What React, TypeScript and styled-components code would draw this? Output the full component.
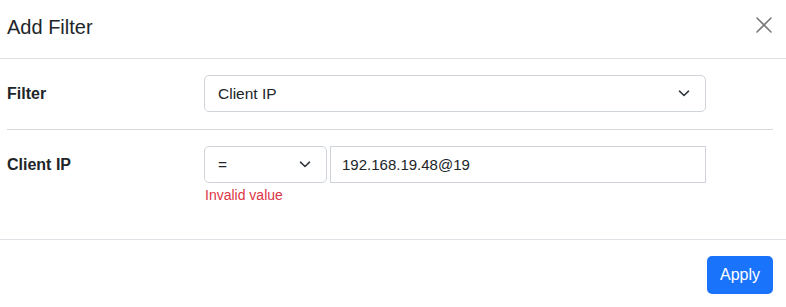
import styled, { createGlobalStyle } from "styled-components";

const GlobalStyle = createGlobalStyle`
  html, body {
    margin: 0;
    padding: 0;
    background: #fff;
  }
  body {
    font-family: "Liberation Sans", Arial, sans-serif;
    color: #212529;
  }
`;

const Modal = styled.div`
  width: 786px;
  background: #fff;
`;

const Header = styled.div`
  height: 58px;
  display: flex;
  align-items: center;
  justify-content: space-between;
  padding: 0 13px 0 7px;
  border-bottom: 1px solid #dee2e6;
`;

const Title = styled.h5`
  margin: 0;
  font-size: 20px;
  font-weight: 400;
  line-height: 1.2;
  margin-top: -4px;
`;

const CloseButton = styled.button`
  width: 18px;
  height: 18px;
  padding: 0;
  margin-top: -8px;
  border: none;
  background: transparent;
  display: flex;
  align-items: center;
  justify-content: center;
  cursor: pointer;
`;

const Body = styled.div`
  padding: 0 13px 19px 7px;
`;

interface RowProps {
  $divider?: boolean;
}

const Row = styled.div<RowProps>`
  display: grid;
  grid-template-columns: 197px 502px;
  align-items: start;
  padding: 16px 0 17px;
  border-bottom: ${(p) => (p.$divider ? "1px solid #d6d8db" : "none")};
`;

const Label = styled.label`
  height: 37px;
  display: flex;
  align-items: center;
  font-size: 16px;
  font-weight: 700;
`;

const Controls = styled.div`
  display: flex;
  flex-direction: column;
`;

const InputGroup = styled.div`
  display: flex;
  gap: 3px;
`;

interface SelectProps {
  $width?: number;
}

const SelectBox = styled.div<SelectProps>`
  box-sizing: border-box;
  width: ${(p) => (p.$width ? `${p.$width}px` : "100%")};
  height: 37px;
  display: flex;
  align-items: center;
  justify-content: space-between;
  padding: 0 15px 0 13px;
  border: 1px solid #ced4da;
  border-radius: 5px;
  font-size: 15.5px;
  color: #212529;
  background: #fff;
`;

const TextInput = styled.input`
  box-sizing: border-box;
  flex: 1;
  height: 37px;
  padding: 0 11px;
  border: 1px solid #ced4da;
  border-radius: 0;
  font-family: "Liberation Sans", Arial, sans-serif;
  font-size: 15px;
  color: #212529;
  outline: none;
`;

const Feedback = styled.div`
  margin-top: 4px;
  padding-left: 1px;
  font-size: 14px;
  line-height: 16px;
  color: #dc3545;
`;

const Footer = styled.div`
  display: flex;
  justify-content: flex-end;
  padding: 16px 13px 0 7px;
  border-top: 1px solid #dee2e6;
`;

const PrimaryButton = styled.button`
  height: 38px;
  padding: 0 13px;
  border: none;
  border-radius: 5px;
  background: #1a73fb;
  color: #fff;
  font-family: "Liberation Sans", Arial, sans-serif;
  font-size: 16px;
  cursor: pointer;
`;

const Chevron = () => (
  <svg width="12" height="7" viewBox="0 0 12 7" fill="none">
    <path d="M1.5 1.2 L6 5.5 L10.5 1.2" stroke="#343a40" strokeWidth="1.6" strokeLinecap="round" strokeLinejoin="round" />
  </svg>
);

const CloseIcon = () => (
  <svg width="16" height="16" viewBox="0 0 16 16" fill="none">
    <path d="M1 1 L15 15 M15 1 L1 15" stroke="#7a7a7a" strokeWidth="1.6" strokeLinecap="round" />
  </svg>
);

export default function App() {
  return (
    <>
      <GlobalStyle />
      <Modal>
        <Header>
          <Title>Add Filter</Title>
          <CloseButton aria-label="Close">
            <CloseIcon />
          </CloseButton>
        </Header>
        <Body>
          <Row $divider>
            <Label>Filter</Label>
            <SelectBox>
              <span>Client IP</span>
              <Chevron />
            </SelectBox>
          </Row>
          <Row>
            <Label>Client IP</Label>
            <Controls>
              <InputGroup>
                <SelectBox $width={123}>
                  <span>=</span>
                  <Chevron />
                </SelectBox>
                <TextInput readOnly value="192.168.19.48@19" />
              </InputGroup>
              <Feedback>Invalid value</Feedback>
            </Controls>
          </Row>
        </Body>
        <Footer>
          <PrimaryButton>Apply</PrimaryButton>
        </Footer>
      </Modal>
    </>
  );
}
